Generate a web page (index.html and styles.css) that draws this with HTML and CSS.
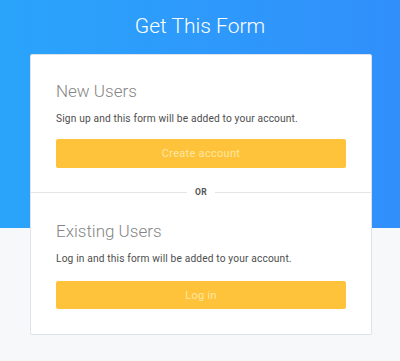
FILE: index.html
```html
<!DOCTYPE html>
<html>
<head>
<meta charset="utf-8">
<link rel="stylesheet" href="styles.css">
</head>
<body>
<div class="page">
  <div class="hero">
    <h1 class="title">Get This Form</h1>
  </div>
  <div class="card">
    <section class="block">
      <h2 class="heading">New Users</h2>
      <p class="desc">Sign up and this form will be added to your account.</p>
      <button class="btn">Create account</button>
    </section>
    <div class="divider"><span class="line"></span><span class="or">OR</span><span class="line"></span></div>
    <section class="block block-bottom">
      <h2 class="heading">Existing Users</h2>
      <p class="desc">Log in and this form will be added to your account.</p>
      <button class="btn btn-bottom">Log in</button>
    </section>
  </div>
</div>
</body>
</html>
```
FILE: styles.css
```css
* { box-sizing: border-box; }
html, body { margin: 0; padding: 0; }
body {
  width: 400px;
  height: 361px;
  overflow: hidden;
  font-family: Roboto, "Liberation Sans", sans-serif;
  background: #f6f8fa;
}
.hero {
  height: 228px;
  background: linear-gradient(90deg, #2aa4fb 0%, #318ffb 100%);
  padding-top: 12px;
}
.title {
  margin: 0;
  text-align: center;
  color: #fff;
  font-weight: 300;
  font-size: 21px;
  line-height: 28px;
}
.card {
  position: relative;
  margin: -174px 28px 0 30px;
  background: #fff;
  border: 1px solid #dfe2e6;
  border-radius: 2px;
  height: 281px;
}
.block { padding: 26px 25px 0 25px; }
.block-bottom { padding-top: 24px; }
.heading {
  margin: 0;
  font-weight: 300;
  font-size: 17px;
  line-height: 20px;
  color: #858585;
}
.desc {
  margin: 11.5px 0 0;
  font-size: 10.2px;
  line-height: 12px;
  color: #4d4d4d;
  letter-spacing: 0.15px;
}
.btn {
  display: block;
  width: 100%;
  margin-top: 14.5px;
  height: 29px;
  border: none;
  border-radius: 2px;
  background: #fec33b;
  color: #ffe7a3;
  font-family: Roboto, "Liberation Sans", sans-serif;
  font-size: 11px;
  font-weight: 400;
  letter-spacing: 0.3px;
}
.btn-bottom { margin-top: 16.5px; height: 28px; }
.divider {
  display: flex;
  align-items: center;
  gap: 8px;
  margin-top: 19px;
  height: 10px;
}
.line { flex: 1; height: 1px; background: #e3e5e8; }
.or {
  font-size: 8.5px;
  line-height: 10px;
  font-weight: 700;
  color: #555;
  letter-spacing: 0.4px;
}
```
